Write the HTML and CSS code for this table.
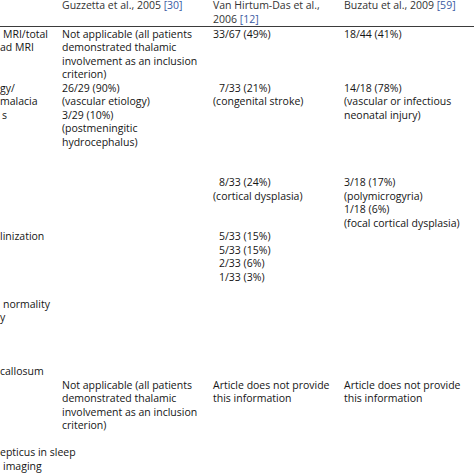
FILE: index.html
```html
<!DOCTYPE html>
<html>
<head>
<meta charset="utf-8">
<link rel="stylesheet" href="styles.css">
</head>
<body>
<div class="table">
  <div class="row head">
    <div class="cell c1"></div>
    <div class="cell">Guzzetta et al., 2005 <span class="ref">[30]</span></div>
    <div class="cell">Van Hirtum-Das et al.,<br>2006 <span class="ref">[12]</span></div>
    <div class="cell">Buzatu et al., 2009 <span class="ref">[59]</span></div>
  </div>

  <div class="body">
    <div class="row">
      <div class="cell c1"><span class="in3">MRI/total</span><br>ad MRI</div>
      <div class="cell">Not applicable (all patients<br>demonstrated thalamic<br>involvement as an inclusion<br>criterion)</div>
      <div class="cell">33/67 (49%)</div>
      <div class="cell">18/44 (41%)</div>
    </div>

    <div class="row">
      <div class="cell c1">gy/<br>malacia<br><span class="in2">s</span></div>
      <div class="cell">26/29 (90%)<br>(vascular etiology)<br>3/29 (10%)<br>(postmeningitic<br>hydrocephalus)</div>
      <div class="cell"><span class="fig">0</span>7/33 (21%)<br>(congenital stroke)</div>
      <div class="cell">14/18 (78%)<br>(vascular or infectious<br>neonatal injury)</div>
    </div>

    <div class="row gap2">
      <div class="cell c1"></div>
      <div class="cell"></div>
      <div class="cell"><span class="fig">0</span>8/33 (24%)<br>(cortical dysplasia)</div>
      <div class="cell">3/18 (17%)<br>(polymicrogyria)<br>1/18 (6%)<br>(focal cortical dysplasia)</div>
    </div>

    <div class="row">
      <div class="cell c1">linization</div>
      <div class="cell"></div>
      <div class="cell"><span class="fig">0</span>5/33 (15%)<br><span class="fig">0</span>5/33 (15%)<br><span class="fig">0</span>2/33 (6%)<br><span class="fig">0</span>1/33 (3%)</div>
      <div class="cell"></div>
    </div>

    <div class="row gap1">
      <div class="cell c1"><span class="in3">normality</span><br>y</div>
      <div class="cell"></div>
      <div class="cell"></div>
      <div class="cell"></div>
    </div>

    <div class="row gap3">
      <div class="cell c1">callosum</div>
      <div class="cell"></div>
      <div class="cell"></div>
      <div class="cell"></div>
    </div>

    <div class="row">
      <div class="cell c1"></div>
      <div class="cell">Not applicable (all patients<br>demonstrated thalamic<br>involvement as an inclusion<br>criterion)</div>
      <div class="cell">Article does not provide<br>this information</div>
      <div class="cell">Article does not provide<br>this information</div>
    </div>

    <div class="row gap1">
      <div class="cell c1">epticus in sleep<br><span class="in3">imaging</span></div>
      <div class="cell"></div>
      <div class="cell"></div>
      <div class="cell"></div>
    </div>
  </div>
</div>
</body>
</html>
```

FILE: styles.css
```css
html, body {
  margin: 0;
  padding: 0;
  background: #ffffff;
}

body {
  width: 474px;
  height: 474px;
  overflow: hidden;
  font-family: "Open Sans", "Noto Sans", sans-serif;
  font-size: 10.5px;
  line-height: 13.5px;
  color: #151515;
}

.table {
  width: 474px;
}

.row {
  display: grid;
  grid-template-columns: 62px 151px 131px 130px;
}

.cell {
  white-space: nowrap;
}

.head {
  margin-top: -1px;
  color: #333333;
  border-bottom: 1.5px solid #3b3b3b;
}

.body {
  padding-top: 0.75px;
}

.ref {
  color: #3b5aa3;
}

.fig {
  visibility: hidden;
}

.in3 {
  padding-left: 3px;
}

.in2 {
  padding-left: 2px;
}

.gap1 {
  margin-top: 13.5px;
}

.gap2 {
  margin-top: 27px;
}

.gap3 {
  margin-top: 40.5px;
}
```
